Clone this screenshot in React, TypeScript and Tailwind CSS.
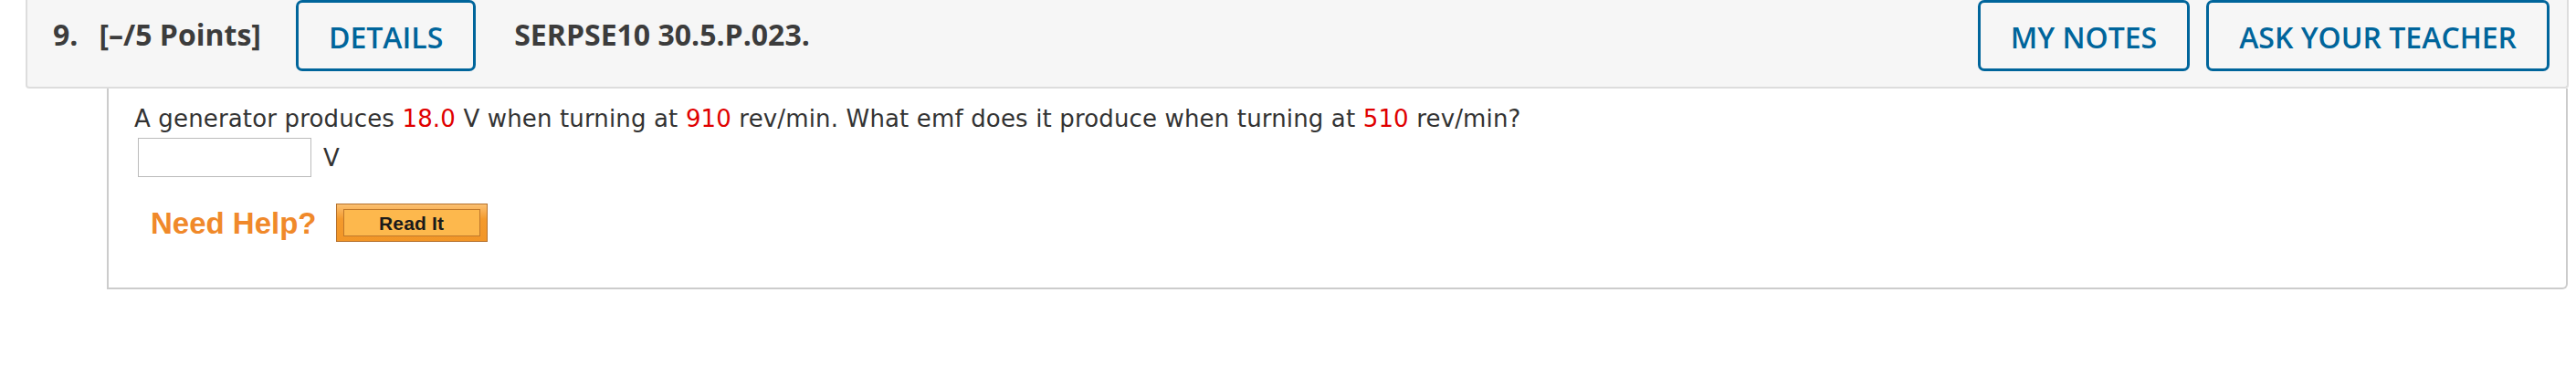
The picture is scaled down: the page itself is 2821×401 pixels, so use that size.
import React from "react";

const headerFont = { fontFamily: '"Open Sans", "Liberation Sans", sans-serif' };

function OutlineButton({ label, className = "" }: { label: string; className?: string }) {
  return (
    <button
      className={`h-[78px] rounded-[7px] border-[3px] border-[#00659b] bg-transparent px-[33px] pt-[22px] pb-[18px] text-[32px] leading-[32px] font-semibold text-[#00659b] ${className}`}
      style={headerFont}
    >
      {label}
    </button>
  );
}

function ReadItButton() {
  return (
    <div className="h-[42px] w-[166px] border border-[#b5712d] bg-[linear-gradient(#fbc072,#f49a2c_40%,#f29627)] p-[5px_7px_5px_7px]">
      <div className="flex h-full items-center justify-center border border-[#c0782a] bg-[#fdb84d] font-['Liberation_Sans',Arial,sans-serif] text-[21px] leading-none font-bold text-[#1a1a1a]">
        Read It
      </div>
    </div>
  );
}

export default function App() {
  return (
    <div className="h-[401px] w-full bg-white">
      {/* question header */}
      <div className="mr-[8px] ml-[28px] flex h-[97px] items-start rounded-b-[4px] border-x-2 border-b-2 border-[#dddddd] bg-[#f6f6f6] pr-[19px] pl-[28px]">
        <div className="mt-[22px] flex items-start text-[32px] leading-[32px] font-bold text-[#3c3c3c]" style={headerFont}>
          <span>9.</span>
          <span className="ml-[23px]">[–/5 Points]</span>
        </div>
        <OutlineButton label="DETAILS" className="ml-[38px]" />
        <div className="mt-[22px] ml-[42px] text-[32px] leading-[32px] font-bold text-[#3c3c3c]" style={headerFont}>
          SERPSE10 30.5.P.023.
        </div>
        <div className="ml-auto flex gap-[18px]">
          <OutlineButton label="MY NOTES" />
          <OutlineButton label="ASK YOUR TEACHER" />
        </div>
      </div>

      {/* question body */}
      <div className="mr-[9px] ml-[117px] rounded-br-[6px] border-x-2 border-b-2 border-[#cccccc] pt-[15px] pb-[50px] pl-[28px] font-['Verdana','DejaVu_Sans',sans-serif] text-[26px] tracking-[0.15px] text-[#333333]">
        <p className="leading-[36px]">
          A generator produces <span className="text-[#e00000]">18.0</span> V when turning at{" "}
          <span className="text-[#e00000]">910</span> rev/min. What emf does it produce when turning at{" "}
          <span className="text-[#e00000]">510</span> rev/min?
        </p>
        <div className="mt-[3px] ml-[4px] flex items-center gap-[13px]">
          <input className="h-[43px] w-[190px] border border-[#bbbbbb] bg-white outline-none" />
          <span className="leading-none">V</span>
        </div>
        <div className="mt-[29px] ml-[18px] flex items-center gap-[21px]">
          <span className="font-['Liberation_Sans',Arial,sans-serif] text-[33px] leading-none font-bold tracking-normal text-[#f0892a]">
            Need Help?
          </span>
          <ReadItButton />
        </div>
      </div>
    </div>
  );
}
